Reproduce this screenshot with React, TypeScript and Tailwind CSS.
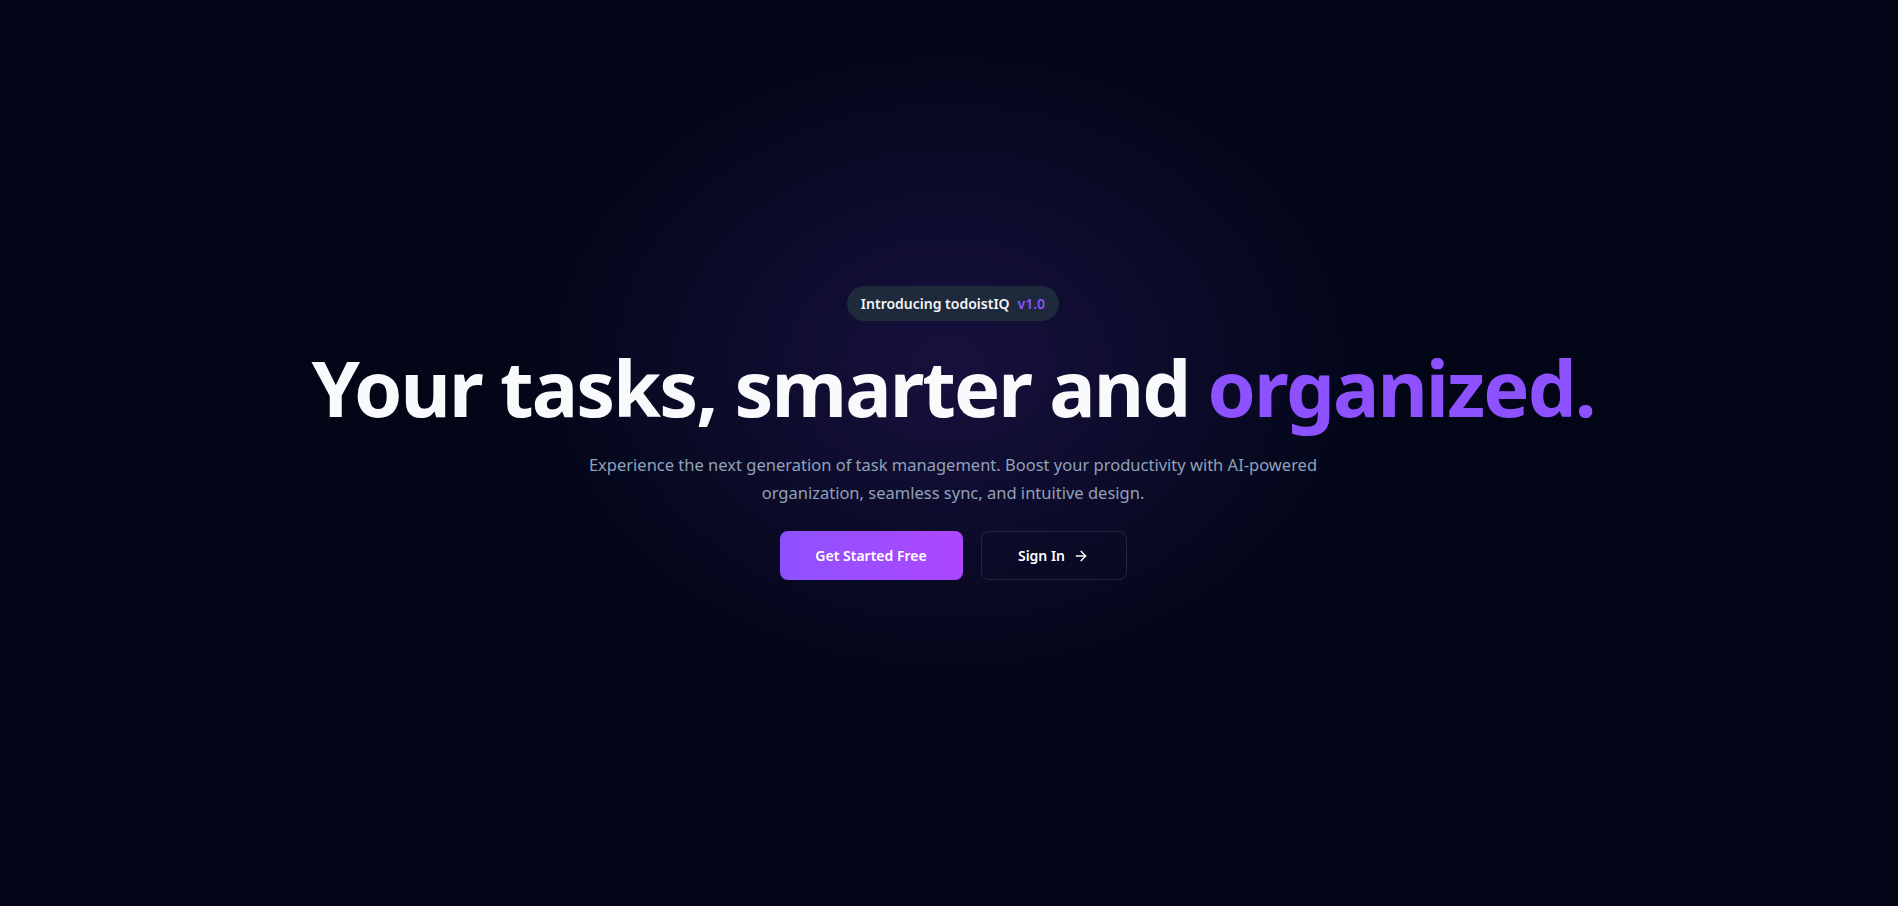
import { ArrowRight } from "lucide-react";

export default function App() {
  return (
    <div
      className="min-h-screen w-full bg-[#020617] bg-[radial-gradient(ellipse_440px_340px_at_50%_40%,rgba(49,30,110,0.45),rgba(2,6,23,0)_100%)] text-slate-50"
      style={{ fontFamily: '"Noto Sans", "Open Sans", sans-serif' }}
    >
      <section className="flex flex-col items-center pl-2 pt-[286px] text-center">
        <div className="flex h-[35px] items-center gap-2 rounded-full bg-[#1e293b] px-[14px] text-[14px] font-semibold">
          <span className="text-slate-100">Introducing todoistIQ</span>
          <span className="text-violet-500">v1.0</span>
        </div>

        <h1 className="mt-7 h-[78px] text-[77.5px] font-bold leading-none tracking-tight text-slate-50">
          Your tasks, smarter and <span className="text-violet-500">organized.</span>
        </h1>

        <p className="mt-6 max-w-[760px] text-[16.5px] leading-7 text-slate-400">
          Experience the next generation of task management. Boost your productivity with AI-powered organization,
          seamless sync, and intuitive design.
        </p>

        <div className="mt-6 flex items-center gap-[18px]">
          <button className="h-[49px] w-[183px] rounded-lg bg-gradient-to-r from-violet-500 to-purple-500 text-[14px] font-semibold text-white">
            Get Started Free
          </button>
          <button className="flex h-[49px] w-[146px] items-center justify-center gap-2 rounded-lg border border-slate-800 text-[14px] font-semibold text-white">
            Sign In
            <ArrowRight className="h-4 w-4" />
          </button>
        </div>
      </section>
    </div>
  );
}
